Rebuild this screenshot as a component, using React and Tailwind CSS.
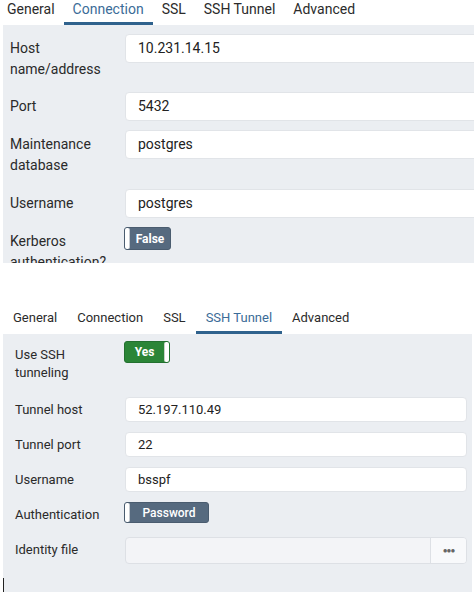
const font = { fontFamily: 'Roboto, "Liberation Sans", sans-serif' };

function Tabs({ items, active, size }) {
  const lg = size === 'lg';
  return (
    <div className={lg ? 'flex h-[25px] -ml-[2px] text-[14px] leading-[18px]' : 'flex h-[34px] ml-[3px] pt-[9px] text-[13px] leading-[18px]'}>
      {items.map((t) => (
        <div
          key={t}
          className={
            (lg ? 'px-[9px] ' : 'px-[10px] ') +
            (t === active
              ? 'border-b-[3px] border-[#2f628d] text-[#3b6c98]'
              : 'border-b-[3px] border-transparent text-[#2b2b2b]')
          }
        >
          {t}
        </div>
      ))}
    </div>
  );
}

function Toggle({ on, label, width, weight = 'font-bold' }) {
  if (on) {
    return (
      <div className={`flex h-[22px] ${width} rounded-[3px] bg-[#2b8537] border border-[#237030] overflow-hidden`}>
        <span className={`flex-1 flex items-center justify-center text-white text-[12px] ${weight}`}>{label}</span>
        <span className="w-[5px] bg-white rounded-l-[2px] border-l border-[#c9d1c9]" />
      </div>
    );
  }
  return (
    <div className={`flex ${width} rounded-[3px] bg-[#566a7f] border border-[#4a5c6f] overflow-hidden`}>
      <span className="w-[5px] bg-white rounded-r-[2px] border-r border-[#c3c9d0]" />
      <span className={`flex-1 flex items-center justify-center text-white text-[12px] ${weight}`}>{label}</span>
    </div>
  );
}

function TopRow({ label, children, className = '' }) {
  return (
    <div className={`flex items-start ${className}`}>
      <div className="w-[115px] shrink-0 pt-[4px] pb-[4px] leading-[21px] text-[#2a2a2a]">{label}</div>
      {children}
    </div>
  );
}

function TopInput({ value }) {
  return (
    <div className="w-[365px] h-[29px] shrink-0 flex items-center pl-[12px] bg-white border border-[#e1e4e8] rounded-[4px] text-[#222]">
      {value}
    </div>
  );
}

function Row({ label, children }) {
  return (
    <div className="flex items-start">
      <div className="w-[110px] shrink-0 pt-[4px] pb-[4px] leading-[17px] text-[#2a2a2a]">{label}</div>
      {children}
    </div>
  );
}

function Input({ value }) {
  return (
    <div className="flex-1 h-[25px] flex items-center pl-[12px] bg-white border border-[#e1e4e8] rounded-[4px] text-[#222]">
      {value}
    </div>
  );
}

export default function App() {
  const tabs = ['General', 'Connection', 'SSL', 'SSH Tunnel', 'Advanced'];
  return (
    <div className="w-[474px] h-[597px] bg-white overflow-hidden" style={font}>
      {/* connection tab */}
      <div className="overflow-hidden">
        <Tabs items={tabs} active="Connection" size="lg" />
        <div className="ml-[3px] h-[238px] overflow-hidden bg-[#ebeef2] pl-[7px] pt-[9px] flex flex-col gap-[9px] text-[14px]">
          <TopRow label={<>Host<br />name/address</>}>
            <TopInput value="10.231.14.15" />
          </TopRow>
          <TopRow label="Port" className="-mt-px">
            <TopInput value="5432" />
          </TopRow>
          <TopRow label={<>Maintenance<br />database</>}>
            <TopInput value="postgres" />
          </TopRow>
          <TopRow label="Username">
            <TopInput value="postgres" />
          </TopRow>
          <TopRow label={<>Kerberos<br />authentication?</>}>
            <div className="-ml-px h-[23px] flex">
              <Toggle label="False" width="w-[47px]" />
            </div>
          </TopRow>
        </div>
      </div>

      {/* ssh tunnel tab */}
      <div className="mt-[37px]">
        <Tabs items={tabs} active="SSH Tunnel" />
        <div className="ml-[3px] mr-[2px] h-[258px] bg-[#ebeef2] pl-[12px] pr-[5px] pt-[7px] flex flex-col gap-[10px] text-[13px]">
          <div className="flex items-start h-[46px]">
            <div className="w-[109px] shrink-0 pt-[5px] leading-[18px] text-[#2a2a2a]">Use SSH<br />tunneling</div>
            <Toggle on label="Yes" width="w-[46px]" />
          </div>
          <Row label="Tunnel host"><Input value="52.197.110.49" /></Row>
          <Row label="Tunnel port"><Input value="22" /></Row>
          <Row label="Username"><Input value="bsspf" /></Row>
          <Row label="Authentication">
            <div className="h-[21px] flex -ml-px">
              <Toggle label="Password" width="w-[85px]" weight="font-medium" />
            </div>
          </Row>
          <Row label="Identity file">
            <div className="flex-1 h-[27px] flex bg-[#f3f4f7] border border-[#dde0e5] rounded-[4px] overflow-hidden">
              <div className="flex-1" />
              <div className="w-[36px] flex items-center justify-center bg-[#f8f9fb] border-l border-[#dde0e5] text-[#666] text-[8px] tracking-[-1px]">
                ●●●
              </div>
            </div>
          </Row>
          <div className="-ml-[12px] mt-[4px] w-px h-[14px] bg-[#222]" />
        </div>
      </div>
    </div>
  );
}
